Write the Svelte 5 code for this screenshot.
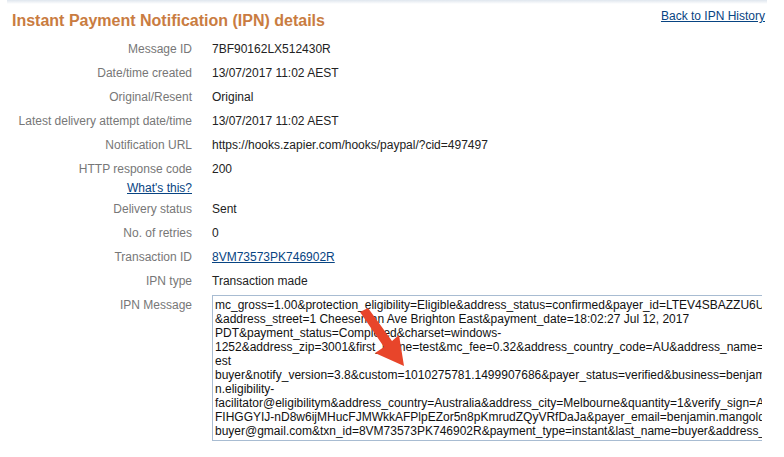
<script lang="ts">
  interface Row {
    label: string;
    value: string;
    link?: boolean;
    help?: boolean;
  }

  const rows: Row[] = [
    { label: 'Message ID', value: '7BF90162LX512430R' },
    { label: 'Date/time created', value: '13/07/2017 11:02 AEST' },
    { label: 'Original/Resent', value: 'Original' },
    { label: 'Latest delivery attempt date/time', value: '13/07/2017 11:02 AEST' },
    { label: 'Notification URL', value: 'https://hooks.zapier.com/hooks/paypal/?cid=497497' },
    { label: 'HTTP response code', value: '200', help: true },
    { label: 'Delivery status', value: 'Sent' },
    { label: 'No. of retries', value: '0' },
    { label: 'Transaction ID', value: '8VM73573PK746902R', link: true },
    { label: 'IPN type', value: 'Transaction made' },
  ];

  const messageLines = [
    'mc_gross=1.00&protection_eligibility=Eligible&address_status=confirmed&payer_id=LTEV4SBAZZU6U',
    '&address_street=1 Cheeseman Ave Brighton East&payment_date=18:02:27 Jul 12, 2017',
    'PDT&payment_status=Completed&charset=windows-',
    '1252&address_zip=3001&first_name=test&mc_fee=0.32&address_country_code=AU&address_name=',
    'est',
    'buyer&notify_version=3.8&custom=1010275781.1499907686&payer_status=verified&business=benjam',
    'n.eligibility-',
    'facilitator@eligibilitym&address_country=Australia&address_city=Melbourne&quantity=1&verify_sign=A',
    'FIHGGYIJ-nD8w6ijMHucFJMWkkAFPlpEZor5n8pKmrudZQyVRfDaJa&payer_email=benjamin.mangold',
    'buyer@gmail.com&txn_id=8VM73573PK746902R&payment_type=instant&last_name=buyer&address_',
  ];
</script>

<div class="page">
  <div class="topband"></div>

  <header class="head">
    <h1>Instant Payment Notification (IPN) details</h1>
    <a class="back" href="#history">Back to IPN History</a>
  </header>

  <div class="details">
    {#each rows as row}
      <div class="label">
        <span>{row.label}</span>
        {#if row.help}
          <a class="help" href="#help">What's this?</a>
        {/if}
      </div>
      <div class="value">
        {#if row.link}
          <a href="#txn">{row.value}</a>
        {:else}
          {row.value}
        {/if}
      </div>
    {/each}

    <div class="label">IPN Message</div>
    <div class="message">
      {#each messageLines as line}
        <div class="line">{line}</div>
      {/each}
    </div>
  </div>

  <svg class="arrow" width="784" height="457" viewBox="0 0 784 457" aria-hidden="true">
    <polygon points="360,312 368,308 392,341 399,335 404,366 375,353 384,347" fill="#e8452a" />
  </svg>
</div>

<style>
  :global(body) {
    margin: 0;
    background: #fff;
  }

  .page {
    position: relative;
    width: 784px;
    height: 457px;
    overflow: hidden;
    font-family: "Liberation Sans", Arial, sans-serif;
    font-size: 12px;
    color: #222;
  }

  .topband {
    height: 4px;
    margin: 0 17px 0 7px;
    background: linear-gradient(#dfe6ee, #fff);
  }

  .head {
    display: flex;
    justify-content: space-between;
    align-items: flex-start;
    padding: 7px 19px 0 12px;
    height: 28px;
  }

  h1 {
    margin: 0;
    font-size: 16px;
    line-height: 20px;
    font-weight: bold;
    color: #c97c41;
  }

  .back {
    line-height: 14px;
    margin-top: -2px;
  }

  a {
    color: #084482;
    text-decoration: underline;
  }

  .details {
    display: grid;
    grid-template-columns: 192px 1fr;
    column-gap: 20px;
    padding-top: 3px;
  }

  .label {
    display: flex;
    flex-direction: column;
    align-items: flex-end;
    min-height: 14px;
    padding-bottom: 10px;
    line-height: 14px;
    color: #777;
  }

  .help {
    margin-top: 5px;
    margin-bottom: -3px;
  }

  .value {
    line-height: 14px;
    color: #222;
  }

  .message {
    width: 550px;
    height: 146px;
    box-sizing: border-box;
    margin-top: -3px;
    padding: 2px 0 0 2px;
    border: 1px solid #a8bcd2;
    border-right: none;
    overflow: hidden;
    color: #111;
  }

  .line {
    height: 14px;
    line-height: 14px;
    white-space: nowrap;
  }

  .arrow {
    position: absolute;
    left: 0;
    top: 0;
    pointer-events: none;
  }
</style>
